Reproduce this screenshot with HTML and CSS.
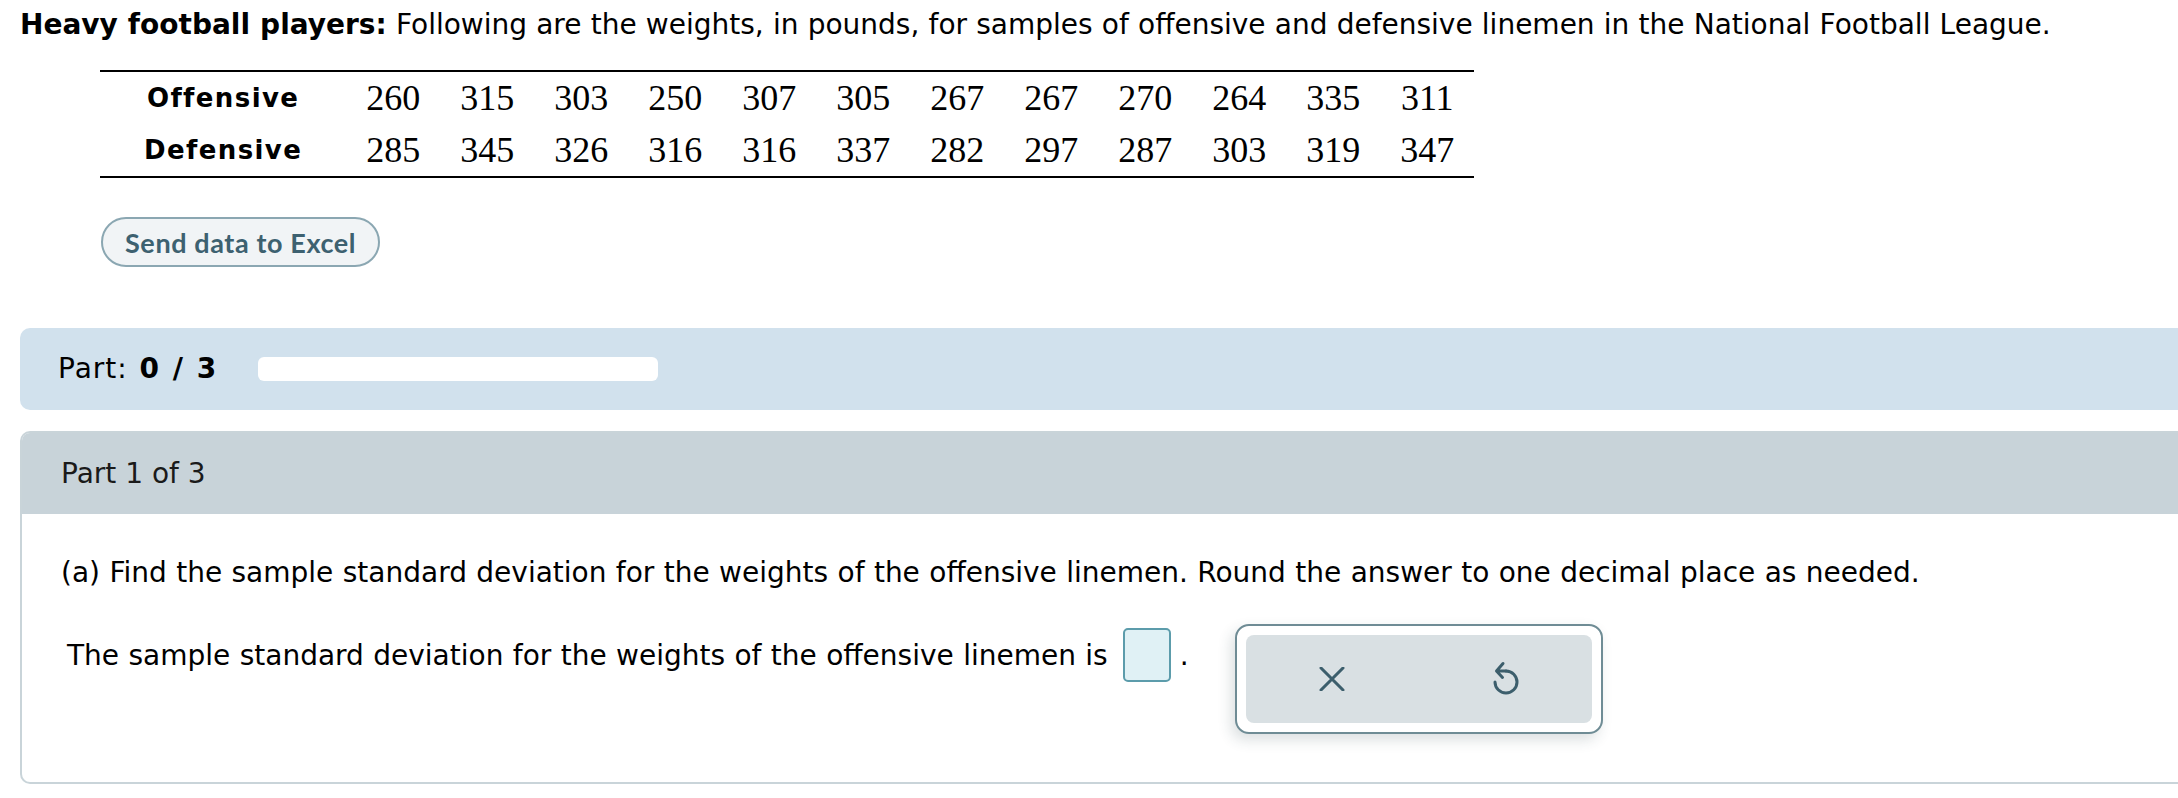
FILE: index.html
```html
<!DOCTYPE html>
<html lang="en">
<head>
<meta charset="utf-8">
<title>Heavy football players</title>
<link rel="stylesheet" href="styles.css">
</head>
<body>
<div class="page">
  <p class="title"><b>Heavy football players:</b> Following are the weights, in pounds, for samples of offensive and defensive linemen in the National Football League.</p>
  <table class="data">
    <tr>
      <th>Offensive</th>
      <td>260</td><td>315</td><td>303</td><td>250</td><td>307</td><td>305</td><td>267</td><td>267</td><td>270</td><td>264</td><td>335</td><td>311</td>
    </tr>
    <tr>
      <th>Defensive</th>
      <td>285</td><td>345</td><td>326</td><td>316</td><td>316</td><td>337</td><td>282</td><td>297</td><td>287</td><td>303</td><td>319</td><td>347</td>
    </tr>
  </table>
  <button class="excel" type="button">Send data to Excel</button>

  <div class="progress">
    <span class="part-label">Part: <b>0 / 3</b></span>
    <div class="track"></div>
  </div>

  <section class="card">
    <header class="card-head">Part 1 of 3</header>
    <div class="card-body">
      <p class="question">(a) Find the sample standard deviation for the weights of the offensive linemen. Round the answer to one decimal place as needed.</p>
      <div class="answer-row">
        <div class="sentence">
          <span class="words">The sample standard deviation for the weights of the offensive linemen is</span>
          <span class="input"></span>
          <span class="period">.</span>
        </div>
        <div class="tools">
          <div class="tools-inner">
            <button class="tool" type="button" aria-label="Clear">
              <svg width="26" height="24" viewBox="0 0 26 24"><path d="M2 1 L24 23 M24 1 L2 23" stroke="#3c5e6c" stroke-width="3" fill="none" stroke-linecap="round"/></svg>
            </button>
            <button class="tool" type="button" aria-label="Undo">
              <svg width="32" height="36" viewBox="0 0 32 36"><path d="M17 10 A11 11 0 1 1 6 21" stroke="#3c5e6c" stroke-width="3" fill="none" stroke-linecap="round"/><path d="M14 2.5 L7.5 10 L17 10 M7.5 10 L13.5 16.5" stroke="#3c5e6c" stroke-width="3" fill="none" stroke-linecap="round" stroke-linejoin="round"/></svg>
            </button>
          </div>
        </div>
      </div>
    </div>
  </section>
</div>
</body>
</html>
```

FILE: styles.css
```css
html, body {
  margin: 0;
  padding: 0;
  background: #ffffff;
}
body {
  font-family: "DejaVu Sans", Verdana, sans-serif;
  font-size: 28px;
  color: #000;
  overflow: hidden;
}
.page {
  padding-left: 20px;
}
.title {
  margin: 0;
  padding-top: 5px;
  line-height: 40px;
  word-spacing: 0.3px;
}
.data {
  margin: 25px 0 0 80px;
  border-collapse: separate;
  border-spacing: 0;
  border-top: 2px solid #000;
  border-bottom: 2px solid #000;
}
.data th {
  font-family: "DejaVu Sans", Verdana, sans-serif;
  font-weight: bold;
  font-size: 26px;
  letter-spacing: 1.4px;
  height: 52px;
  padding: 0 44px;
  text-align: center;
}
.data td {
  font-family: "Liberation Serif", "Times New Roman", serif;
  font-size: 36px;
  height: 52px;
  padding: 0 20px;
  text-align: center;
}
.excel {
  display: block;
  margin: 39px 0 0 81px;
  height: 50px;
  padding: 0 22px;
  border: 2px solid #8ba7b2;
  border-radius: 25px;
  background: #f1f4f6;
  color: #3d6170;
  font-family: Lato, "Open Sans", sans-serif;
  font-weight: 700;
  font-size: 27px;
  letter-spacing: 0.6px;
}
.progress {
  margin-top: 61px;
  height: 82px;
  background: #d1e1ed;
  border-radius: 10px 0 0 10px;
  display: flex;
  align-items: center;
  padding-left: 38px;
  gap: 41px;
}
.part-label {
  line-height: 40px;
  letter-spacing: 1px;
  word-spacing: 2px;
}
.track {
  width: 400px;
  height: 24px;
  background: #ffffff;
  border-radius: 6px;
}
.card {
  margin-top: 21px;
  border: 2px solid #c9d4d9;
  border-right: none;
  border-radius: 10px 0 0 10px;
  overflow: hidden;
}
.card-head {
  background: #c8d3d9;
  height: 81px;
  display: flex;
  align-items: center;
  padding-left: 39px;
  color: #1a1a1a;
}
.card-body {
  padding: 39px 0 48px 39px;
}
.question {
  margin: 0;
  line-height: 40px;
  word-spacing: 0.5px;
}
.answer-row {
  margin-top: 31px;
  display: flex;
  align-items: flex-start;
}
.sentence {
  margin: 4px 0 0 6px;
  display: flex;
  align-items: center;
  line-height: 40px;
  word-spacing: 0.5px;
}
.words {
  padding-top: 2px;
}
.input {
  width: 44px;
  height: 50px;
  margin-left: 15px;
  border: 2px solid #5c9cab;
  border-radius: 5px;
  background: #e0f1f5;
}
.period {
  margin-left: 9px;
  padding-top: 2px;
}
.tools {
  margin-left: 46px;
  width: 346px;
  padding: 9px;
  border: 2px solid #6f8c95;
  border-radius: 14px;
  background: #fff;
  box-shadow: -4px 6px 14px rgba(40, 60, 70, 0.16);
}
.tools-inner {
  display: flex;
  height: 88px;
  background: #d9e0e3;
  border-radius: 8px;
}
.tool {
  flex: 1;
  display: flex;
  align-items: center;
  justify-content: center;
  border: none;
  background: transparent;
  padding: 0;
}
```
